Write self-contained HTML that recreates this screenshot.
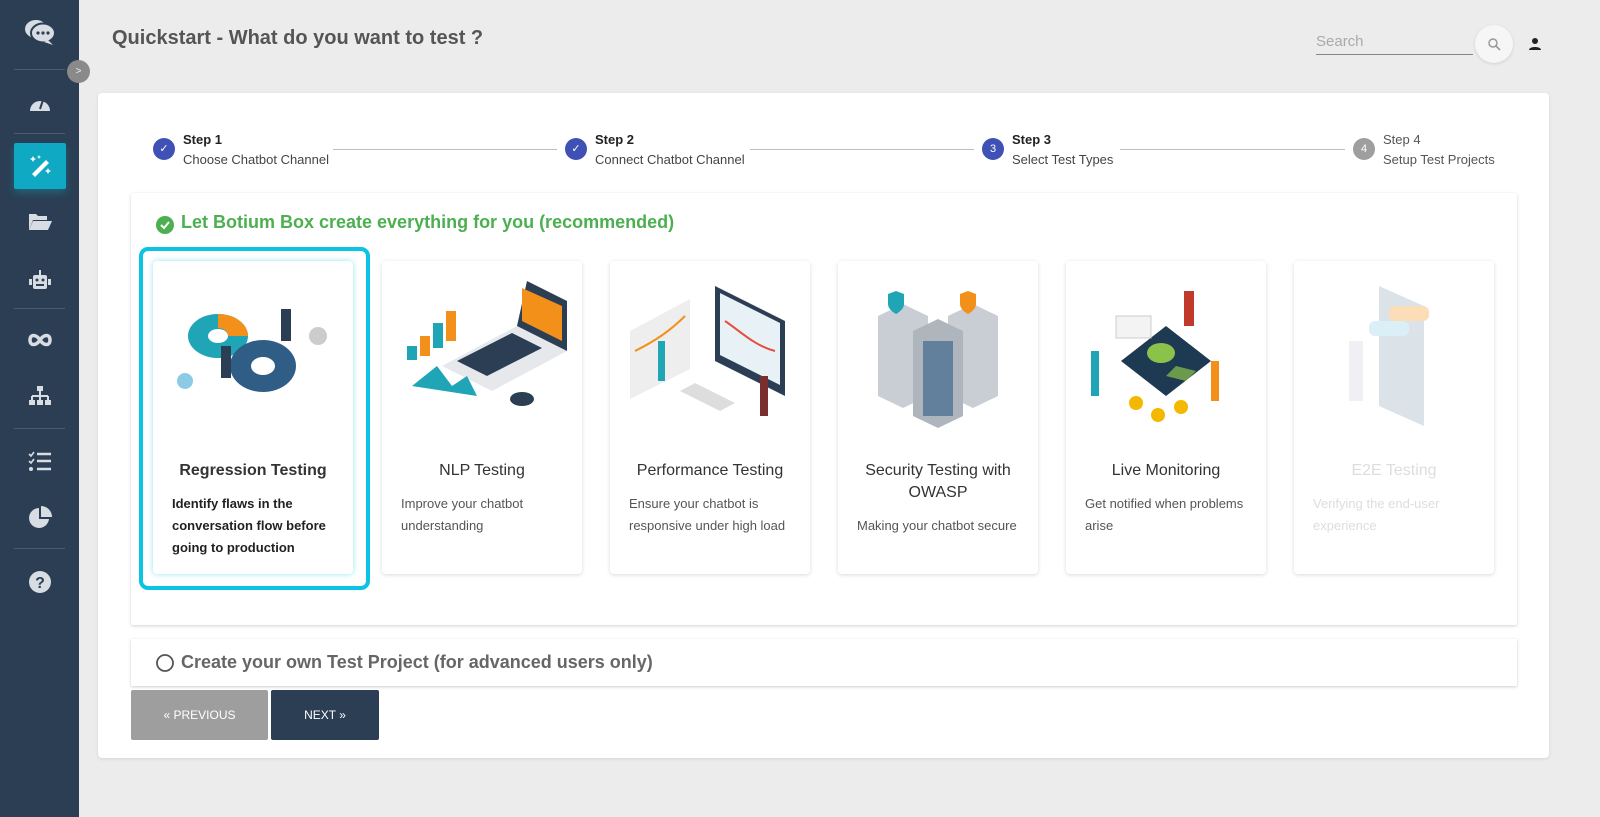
<!DOCTYPE html>
<html><head><meta charset="utf-8">
<style>
*{box-sizing:border-box;margin:0;padding:0}
body{width:1600px;height:817px;background:#ececec;font-family:"Liberation Sans",sans-serif;position:relative;overflow:hidden;color:#333}
.side{position:absolute;left:0;top:0;width:79px;height:817px;background:#2b3e54}
.ic{position:absolute;left:0;width:79px;text-align:center;color:#d8dde3}
.sep{position:absolute;left:14px;width:51px;height:1px;background:#4a5b6e}
.toggle{position:absolute;left:67px;top:60px;width:23px;height:23px;border-radius:50%;background:#8a8a8a;color:#eee;font-size:10px;text-align:center;line-height:23px}
h1{position:absolute;left:112px;top:27px;font-size:20px;font-weight:bold;color:#555}
.search{position:absolute;left:1316px;top:33px;width:157px;border-bottom:1px solid #888;color:#aaa;font-size:15px;padding-bottom:4px}
.sbtn{position:absolute;left:1475px;top:25px;width:38px;height:38px;border-radius:50%;background:#f6f6f6;box-shadow:0 1px 3px rgba(0,0,0,.12)}
.main{position:absolute;left:98px;top:93px;width:1451px;height:665px;background:#fff;border-radius:4px;box-shadow:0 1px 3px rgba(0,0,0,.1)}
.step{position:absolute;top:130px;font-size:13px;color:#444;line-height:20px}
.step b{color:#222;font-weight:bold}
.circ{position:absolute;top:138px;width:22px;height:22px;border-radius:50%;background:#3f51b5;color:#fff;font-size:11px;text-align:center;line-height:22px}
.line{position:absolute;top:149px;height:1px;background:#bdbdbd}
.panel{position:absolute;left:131px;top:193px;width:1386px;height:432px;background:#fff;box-shadow:0 1px 3px rgba(0,0,0,.18);border-radius:2px}
.panel2{position:absolute;left:131px;top:639px;width:1386px;height:47px;background:#fff;box-shadow:0 1px 3px rgba(0,0,0,.2)}
.card{position:absolute;top:261px;width:200px;height:313px;background:#fff;border-radius:4px;box-shadow:0 1px 4px rgba(0,0,0,.15)}
.card .t{position:absolute;top:199px;left:0;width:100%;text-align:center;font-size:16px;color:#333;line-height:22px}
.card .d{position:absolute;top:232px;left:19px;right:12px;font-size:13px;color:#555;line-height:22px}
.card svg{position:absolute;left:0;top:20px}
.sel{position:absolute;left:139px;top:247px;width:231px;height:343px;border:4px solid #0bc3e3;border-radius:9px}
.btn{position:absolute;top:690px;height:50px;color:#fff;font-size:12px;text-align:center;line-height:50px;border-radius:2px}
</style></head><body>
<div class="side">
 <svg class="ic" style="top:18px;left:23px;width:34px" width="34" height="30" viewBox="0 0 34 30"><ellipse cx="13" cy="11" rx="11" ry="9" fill="#d8dde3"/><ellipse cx="20" cy="15" rx="12" ry="9.5" fill="#d8dde3" stroke="#2b3e54" stroke-width="2"/><path d="M25 22l5 5-9-3z" fill="#d8dde3"/><circle cx="15" cy="15" r="1.6" fill="#2b3e54"/><circle cx="20" cy="15" r="1.6" fill="#2b3e54"/><circle cx="25" cy="15" r="1.6" fill="#2b3e54"/></svg>
 <div class="sep" style="top:69px"></div>
 <svg style="position:absolute;left:28px;top:93px" width="24" height="20" viewBox="0 0 24 20"><path d="M2 18A10 10 0 1 1 22 18Z" fill="#d8dde3"/><path d="M12 16l3-9" stroke="#2b3e54" stroke-width="2"/></svg>
 <div class="sep" style="top:133px"></div>
 <div style="position:absolute;left:14px;top:143px;width:52px;height:46px;background:#10a9c4;border-radius:2px;box-shadow:0 4px 8px rgba(16,169,196,.35)"></div>
 <svg style="position:absolute;left:27px;top:152px" width="26" height="26" viewBox="0 0 26 26"><path d="M5 22l14-14 3 3-14 14z" fill="#fff"/><path d="M6 4l1 2 2 1-2 1-1 2-1-2-2-1 2-1zM21 16l1 2 2 1-2 1-1 2-1-2-2-1 2-1zM12 3l.7 1.5 1.5.5-1.5.5L12 7l-.7-1.5-1.5-.5 1.5-.5z" fill="#fff"/></svg>
 <svg style="position:absolute;left:28px;top:213px" width="24" height="18" viewBox="0 0 24 18"><path d="M1 1h7l2 2h9v4H5L1 17z" fill="#d8dde3"/><path d="M5 8h19l-4 9H1z" fill="#d8dde3"/></svg>
 <svg style="position:absolute;left:28px;top:269px" width="24" height="22" viewBox="0 0 24 22"><rect x="5" y="6" width="14" height="14" rx="2" fill="#d8dde3"/><rect x="1" y="10" width="3" height="6" fill="#d8dde3"/><rect x="20" y="10" width="3" height="6" fill="#d8dde3"/><rect x="11" y="1" width="2" height="5" fill="#d8dde3"/><circle cx="9" cy="11" r="1.5" fill="#2b3e54"/><circle cx="15" cy="11" r="1.5" fill="#2b3e54"/><rect x="8" y="15" width="8" height="2" fill="#2b3e54"/></svg>
 <div class="sep" style="top:308px"></div>
 <svg style="position:absolute;left:27px;top:332px" width="26" height="16" viewBox="0 0 26 16"><path d="M13 8C9 2 3 2 3 8s6 6 10 0 10-6 10 0-6 6-10 0" stroke="#d8dde3" stroke-width="3.5" fill="none"/></svg>
 <svg style="position:absolute;left:28px;top:385px" width="24" height="22" viewBox="0 0 24 22"><rect x="9" y="1" width="6" height="5" fill="#d8dde3"/><path d="M12 6v5M4 11h16M4 11v4M12 11v4M20 11v4" stroke="#d8dde3" stroke-width="2" fill="none"/><rect x="1" y="15" width="6" height="5" fill="#d8dde3"/><rect x="9" y="15" width="6" height="5" fill="#d8dde3"/><rect x="17" y="15" width="6" height="5" fill="#d8dde3"/></svg>
 <div class="sep" style="top:428px"></div>
 <svg style="position:absolute;left:28px;top:450px" width="24" height="22" viewBox="0 0 24 22"><path d="M1 4l2 2 3-4M1 11l2 2 3-4" stroke="#d8dde3" stroke-width="1.6" fill="none"/><circle cx="3" cy="19" r="2" fill="#d8dde3"/><path d="M9 4h14M9 11h14M9 19h14" stroke="#d8dde3" stroke-width="2.5"/></svg>
 <svg style="position:absolute;left:28px;top:506px" width="24" height="24" viewBox="0 0 24 24"><path d="M11 2A10 10 0 1 0 21 13H11z" fill="#d8dde3"/><path d="M13 0v11h11A11 11 0 0 0 13 0z" fill="#d8dde3"/></svg>
 <div class="sep" style="top:548px"></div>
 <svg style="position:absolute;left:28px;top:570px" width="24" height="24" viewBox="0 0 24 24"><circle cx="12" cy="12" r="11" fill="#d8dde3"/><text x="12" y="18" text-anchor="middle" font-family="Liberation Sans" font-weight="bold" font-size="16" fill="#2b3e54">?</text></svg>
</div>
<div class="toggle">&gt;</div>
<h1>Quickstart - What do you want to test ?</h1>
<div class="search">Search</div>
<div class="sbtn"><svg style="position:absolute;left:12px;top:12px" width="14" height="14" viewBox="0 0 14 14"><circle cx="6" cy="6" r="4" stroke="#999" stroke-width="1.5" fill="none"/><path d="M9 9l4 4" stroke="#999" stroke-width="1.6"/></svg></div>
<svg style="position:absolute;left:1528px;top:37px" width="14" height="14" viewBox="0 0 14 14"><circle cx="7" cy="4" r="3" fill="#222"/><path d="M1 13c0-4 12-4 12 0z" fill="#222"/></svg>
<div class="main"></div>
<div class="circ" style="left:153px">✓</div>
<div class="step" style="left:183px"><b>Step 1</b><br>Choose Chatbot Channel</div>
<div class="line" style="left:333px;width:224px"></div>
<div class="circ" style="left:565px">✓</div>
<div class="step" style="left:595px"><b>Step 2</b><br>Connect Chatbot Channel</div>
<div class="line" style="left:750px;width:224px"></div>
<div class="circ" style="left:982px">3</div>
<div class="step" style="left:1012px"><b>Step 3</b><br>Select Test Types</div>
<div class="line" style="left:1120px;width:225px"></div>
<div class="circ" style="left:1353px;background:#9e9e9e">4</div>
<div class="step" style="left:1383px;color:#555">Step 4<br>Setup Test Projects</div>
<div class="panel"></div>
<svg style="position:absolute;left:156px;top:216px" width="18" height="18" viewBox="0 0 18 18"><circle cx="9" cy="9" r="9" fill="#4caf50"/><path d="M5 9l3 3 5-6" stroke="#fff" stroke-width="2" fill="none"/></svg>
<div style="position:absolute;left:181px;top:212px;font-size:18px;font-weight:bold;color:#4caf50">Let Botium Box create everything for you (recommended)</div>
<div class="sel"></div>
<div class="card" style="left:153px;box-shadow:0 0 6px rgba(11,195,227,.45)">
 <svg width="200" height="150" viewBox="0 0 200 150"><ellipse cx="65" cy="55" rx="30" ry="22" fill="#1fa5b5"/><path d="M65 33a30 22 0 0 1 30 22h-20a10 8 0 0 0-10-8z" fill="#f39019"/><ellipse cx="110" cy="85" rx="33" ry="26" fill="#2f5d85"/><ellipse cx="110" cy="85" rx="12" ry="9" fill="#fff"/><ellipse cx="65" cy="55" rx="10" ry="7" fill="#fff"/><rect x="68" y="65" width="10" height="32" fill="#2b3e54"/><rect x="128" y="28" width="10" height="32" fill="#2b3e54"/><circle cx="165" cy="55" r="9" fill="#ccc"/><circle cx="32" cy="100" r="8" fill="#8ccbe6"/></svg>
 <div class="t" style="font-weight:bold">Regression Testing</div>
 <div class="d" style="font-weight:bold;color:#222">Identify flaws in the conversation flow before going to production</div>
</div>
<div class="card" style="left:382px">
 <svg width="200" height="150" viewBox="0 0 200 150"><path d="M60 85l75-40 50 25-75 40z" fill="#e6e8eb"/><path d="M75 80l55-28 30 15-55 28z" fill="#2b3e54"/><path d="M135 45l50 25V20l-40-20z" fill="#2b3e54"/><path d="M140 40l40 20V25l-40-18z" fill="#f39019"/><rect x="25" y="65" width="10" height="14" fill="#1fa5b5"/><rect x="38" y="55" width="10" height="20" fill="#f39019"/><rect x="51" y="42" width="10" height="25" fill="#1fa5b5"/><rect x="64" y="30" width="10" height="30" fill="#f39019"/><path d="M30 105l25-20 15 20 15-10 10 20z" fill="#1fa5b5"/><ellipse cx="140" cy="118" rx="12" ry="7" fill="#2b3e54"/></svg>
 <div class="t">NLP Testing</div>
 <div class="d">Improve your chatbot understanding</div>
</div>
<div class="card" style="left:610px">
 <svg width="200" height="150" viewBox="0 0 200 150"><path d="M20 50l60-32v70l-60 30z" fill="#eee"/><path d="M25 70c20-10 35-20 50-35" stroke="#f39019" stroke-width="2" fill="none"/><path d="M105 5l70 35v75l-70-35z" fill="#2b3e54"/><path d="M110 12l60 30v62l-60-30z" fill="#e8f2f6"/><path d="M115 40c15 10 30 25 50 30" stroke="#e74c3c" stroke-width="2" fill="none"/><rect x="48" y="60" width="7" height="40" fill="#1fa5b5"/><rect x="150" y="95" width="8" height="40" fill="#7a2f2f"/><path d="M70 110l40 20 15-8-40-20z" fill="#ddd"/></svg>
 <div class="t">Performance Testing</div>
 <div class="d">Ensure your chatbot is responsive under high load</div>
</div>
<div class="card" style="left:838px">
 <svg width="200" height="150" viewBox="0 0 200 150"><path d="M40 35l25-12 25 12v80l-25 12-25-12z" fill="#c9ced4"/><path d="M110 35l25-12 25 12v80l-25 12-25-12z" fill="#c9ced4"/><path d="M75 50l25-12 25 12v85l-25 12-25-12z" fill="#aeb5bd"/><path d="M85 60h30v75H85z" fill="#2f5d85" opacity=".6"/><path d="M58 10l8 3v10c0 6-8 10-8 10s-8-4-8-10V13z" fill="#1fa5b5"/><path d="M130 10l8 3v10c0 6-8 10-8 10s-8-4-8-10V13z" fill="#f39019"/></svg>
 <div class="t">Security Testing with<br>OWASP</div>
 <div class="d" style="top:254px">Making your chatbot secure</div>
</div>
<div class="card" style="left:1066px">
 <svg width="200" height="150" viewBox="0 0 200 150"><path d="M55 80l45-35 45 35-45 35z" fill="#1e3a52"/><ellipse cx="95" cy="72" rx="14" ry="10" fill="#8bc34a"/><path d="M110 85l20 5-10 10-20-5z" fill="#8bc34a" opacity=".7"/><rect x="50" y="35" width="35" height="22" fill="#f3f3f3" stroke="#ccc"/><rect x="118" y="10" width="10" height="35" fill="#c0392b"/><rect x="25" y="70" width="8" height="45" fill="#1fa5b5"/><rect x="145" y="80" width="8" height="40" fill="#f39019"/><circle cx="70" cy="122" r="7" fill="#f5b800"/><circle cx="92" cy="134" r="7" fill="#f5b800"/><circle cx="115" cy="126" r="7" fill="#f5b800"/></svg>
 <div class="t">Live Monitoring</div>
 <div class="d">Get notified when problems arise</div>
</div>
<div class="card" style="left:1294px">
 <svg width="200" height="150" viewBox="0 0 200 150" opacity=".3"><path d="M85 5l45 20v120l-45-20z" fill="#8aa4b8"/><rect x="75" y="40" width="40" height="15" rx="6" fill="#8ccbe6"/><rect x="95" y="25" width="40" height="15" rx="6" fill="#f39019"/><rect x="55" y="60" width="14" height="60" fill="#ccd"/></svg>
 <div class="t" style="color:#ddd">E2E Testing</div>
 <div class="d" style="color:#ddd">Verifying the end-user experience</div>
</div>
<div class="panel2"></div>
<svg style="position:absolute;left:156px;top:654px" width="18" height="18" viewBox="0 0 18 18"><circle cx="9" cy="9" r="8" stroke="#555" stroke-width="1.8" fill="none"/></svg>
<div style="position:absolute;left:181px;top:652px;font-size:18px;font-weight:bold;color:#666">Create your own Test Project (for advanced users only)</div>
<div class="btn" style="left:131px;width:137px;background:#9e9e9e">« PREVIOUS</div>
<div class="btn" style="left:271px;width:108px;background:#2b3e54">NEXT »</div>
</body></html>
